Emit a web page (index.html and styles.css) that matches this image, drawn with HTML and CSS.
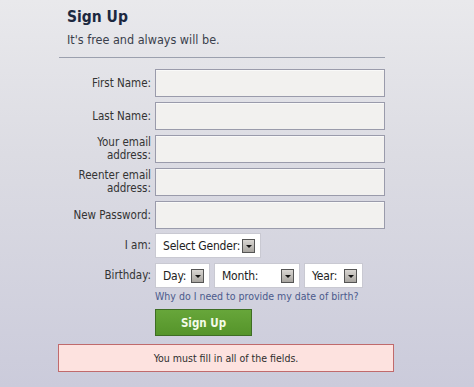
FILE: index.html
```html
<!DOCTYPE html>
<html>
<head>
<meta charset="utf-8">
<link rel="stylesheet" href="styles.css">
</head>
<body>
<div class="page">
  <div class="header">
    <div class="title">Sign Up</div>
    <div class="subtitle">It's free and always will be.</div>
  </div>
  <div class="divider"></div>
  <div class="form">
    <div class="row"><div class="label">First Name:</div><div class="input"></div></div>
    <div class="row"><div class="label">Last Name:</div><div class="input"></div></div>
    <div class="row"><div class="label">Your email<br>address:</div><div class="input"></div></div>
    <div class="row"><div class="label">Reenter email<br>address:</div><div class="input"></div></div>
    <div class="row"><div class="label">New Password:</div><div class="input"></div></div>
    <div class="row sel-row gender"><div class="label">I am:</div>
      <div class="select w-gender"><span>Select Gender:</span><span class="arrow"></span></div>
    </div>
    <div class="row sel-row birthday"><div class="label">Birthday:</div>
      <div class="selects">
        <div class="select w-day"><span>Day:</span><span class="arrow"></span></div>
        <div class="select w-month"><span>Month:</span><span class="arrow"></span></div>
        <div class="select w-year"><span>Year:</span><span class="arrow"></span></div>
      </div>
    </div>
    <div class="row link-row"><div class="label"></div><a class="why">Why do I need to provide my date of birth?</a></div>
    <div class="row btn-row"><div class="label"></div><div class="button">Sign Up</div></div>
  </div>
  <div class="error">You must fill in all of the fields.</div>
</div>
</body>
</html>
```
FILE: styles.css
```css
html, body {
  margin: 0;
  padding: 0;
  height: 100%;
}
body {
  background: linear-gradient(to bottom, #e9e9ec 0%, #dcdce3 40%, #cbcbdb 100%);
  font-family: "DejaVu Sans Condensed", "DejaVu Sans", sans-serif;
  font-stretch: condensed;
  color: #333;
}
.page {
  padding-top: 7px;
  width: 474px;
  height: 387px;
  box-sizing: border-box;
}
.header {
  padding-left: 67px;
}
.title {
  font-size: 15.5px;
  font-weight: bold;
  color: #1c2840;
  line-height: 20px;
}
.subtitle {
  font-size: 12.5px;
  color: #3a3f4c;
  line-height: 18px;
  margin-top: 4px;
}
.divider {
  margin: 8px 0 0 59px;
  width: 326px;
  height: 1px;
  background: #9ba0ae;
}
.form {
  margin-top: 11px;
  display: flex;
  flex-direction: column;
  gap: 5px;
}
.row {
  display: flex;
  align-items: center;
}
.label {
  width: 155px;
  flex: none;
  text-align: right;
  padding-right: 4px;
  box-sizing: border-box;
  font-size: 11.5px;
  line-height: 13px;
  color: #333;
}
.input {
  width: 230px;
  height: 28px;
  box-sizing: border-box;
  border: 1px solid #9a9bab;
  background: #f2f1ef;
  box-shadow: inset 0 1px 1px rgba(255,255,255,0.6);
}
.sel-row.gender {
  margin-top: -1px;
}
.selects {
  display: flex;
  gap: 4px;
}
.select {
  height: 25px;
  box-sizing: border-box;
  background: #ffffff;
  border: 1px solid #c9c9d2;
  display: flex;
  align-items: center;
  justify-content: space-between;
  padding: 0 5px 0 7px;
  font-size: 12px;
  letter-spacing: -0.2px;
  color: #222;
  white-space: nowrap;
}
.w-gender { width: 106px; }
.w-day { width: 55px; }
.w-month { width: 86px; }
.w-year { width: 59px; }
.arrow {
  width: 13px;
  height: 14px;
  box-sizing: border-box;
  border: 1px solid #555;
  background: linear-gradient(to bottom, #d9d6d2, #a8a5a0);
  position: relative;
  flex: none;
}
.arrow::after {
  content: "";
  position: absolute;
  left: 3px;
  top: 5px;
  border-left: 3px solid transparent;
  border-right: 3px solid transparent;
  border-top: 3px solid #111;
}
.link-row {
  margin-top: -3px;
}
.why {
  font-size: 10.5px;
  color: #4b5a8c;
  line-height: 13px;
  text-decoration: none;
}
.btn-row {
  margin-top: 1px;
}
.button {
  width: 97px;
  height: 27px;
  box-sizing: border-box;
  background: linear-gradient(to bottom, #67a63a, #55942a);
  border: 1px solid #3e6d24;
  color: #f4fbe9;
  font-weight: bold;
  font-size: 11.5px;
  display: flex;
  align-items: center;
  justify-content: center;
}
.error {
  margin: 8px 0 0 58px;
  width: 336px;
  height: 28px;
  box-sizing: border-box;
  border: 1px solid #c06a6c;
  background: #fde2df;
  font-size: 10.5px;
  color: #2e2e2e;
  display: flex;
  align-items: center;
  justify-content: center;
}
```
